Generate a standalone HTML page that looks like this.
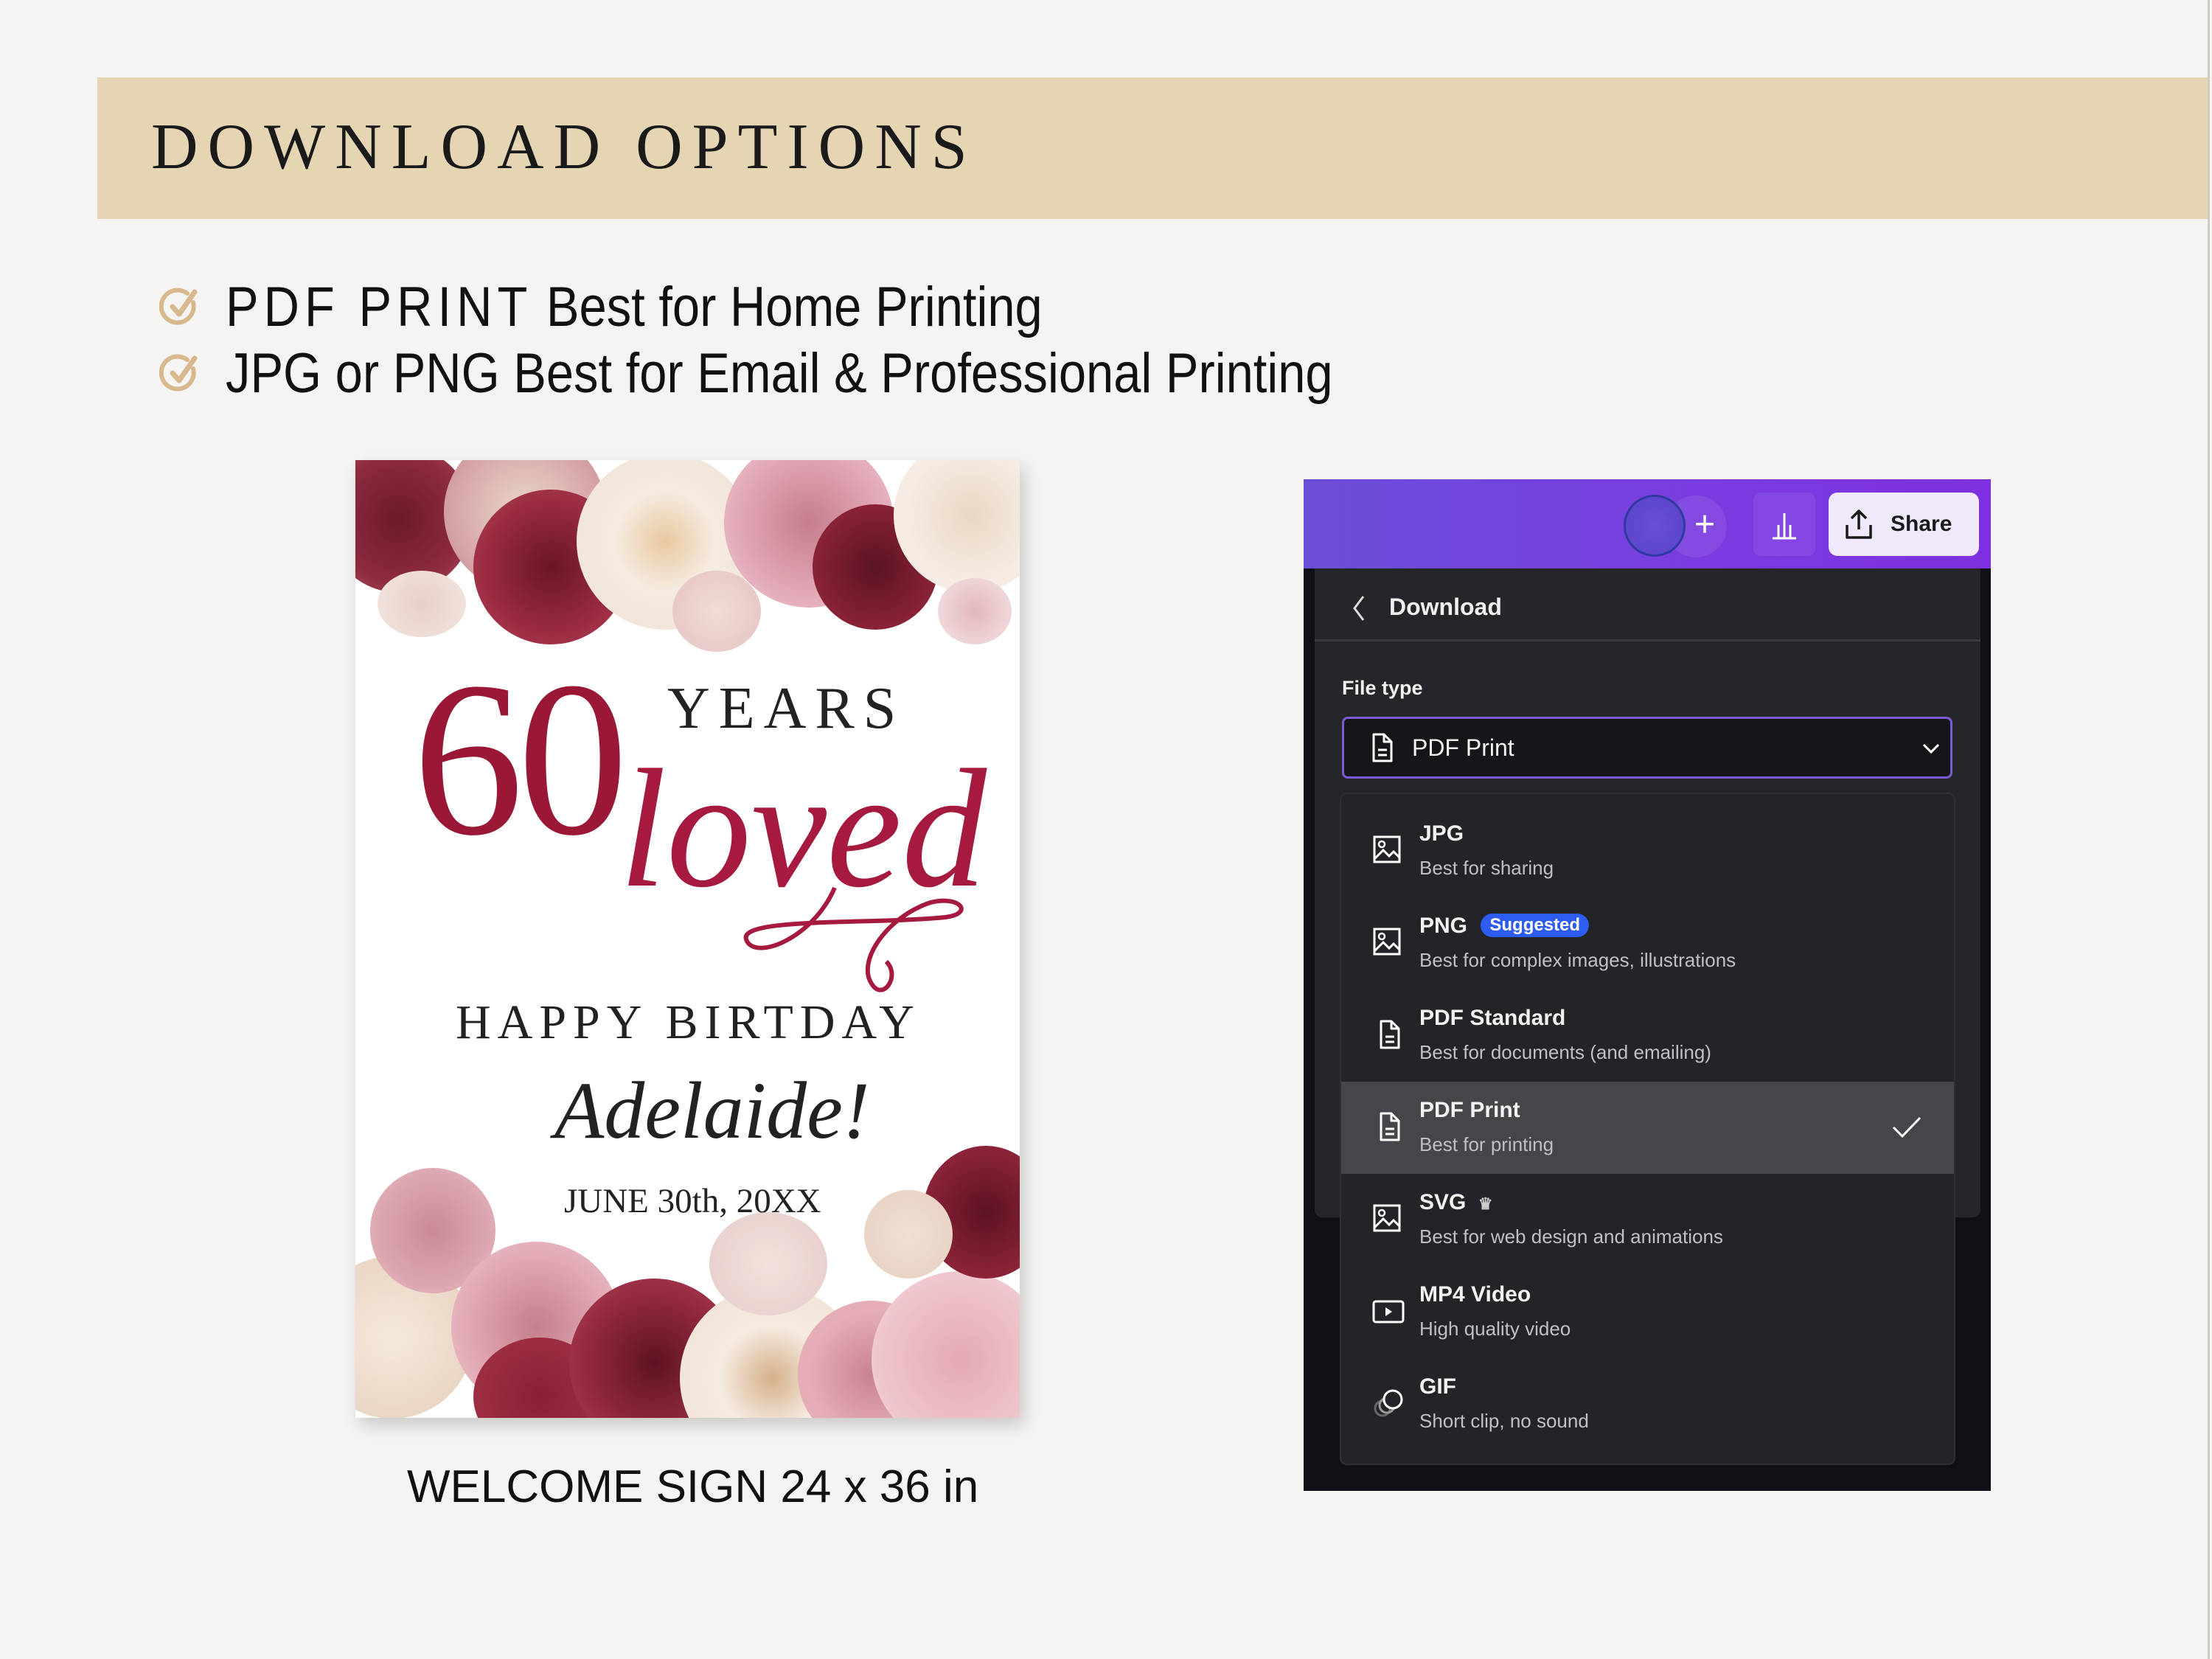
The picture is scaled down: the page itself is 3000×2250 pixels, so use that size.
<!DOCTYPE html>
<html><head><meta charset="utf-8"><style>
*{margin:0;padding:0;box-sizing:border-box}
body{width:3000px;height:2250px;background:#f5f4f2;position:relative;overflow:hidden;font-family:"Liberation Sans",sans-serif}
.abs{position:absolute}
#banner{left:132px;top:105px;width:2864px;height:192px;background:#e6d5b3}
#rline{left:2994px;top:0;width:3px;height:2250px;background:#cfcac4}
#title{left:205px;top:152px;font-family:"Liberation Serif",serif;font-size:88px;line-height:96px;letter-spacing:13px;color:#1a1a1a;white-space:nowrap;font-weight:normal}
.chk{position:absolute;white-space:nowrap;font-size:76px;line-height:80px;color:#111;transform:scaleX(0.88);transform-origin:left center}
.ic{position:absolute;width:58px;height:58px}
#card{left:482px;top:624px;width:901px;height:1299px;background:#fff;overflow:hidden;box-shadow:6px 10px 22px rgba(0,0,0,.18)}
.f{position:absolute;border-radius:50%}
.serif{font-family:"Liberation Serif",serif}
#panel{left:1768px;top:650px;width:932px;height:1372px;background:#0f1116;overflow:hidden}
#bar{left:0;top:0;width:932px;height:121px;background:linear-gradient(90deg,#6b4fd9,#7a3be0 60%,#7d30df)}
#dl{left:15px;top:121px;width:903px;height:880px;background:#252629;border-radius:0 0 10px 10px}
.row{position:absolute;left:0;width:833px;height:125px}
.row .t{position:absolute;left:106px;top:22px;font-size:30px;color:#f2f2f2;font-weight:bold;white-space:nowrap}
.row .s{position:absolute;left:106px;top:70px;font-size:26px;color:#c0c0c4;white-space:nowrap}
.row svg{position:absolute;left:42px;top:40px}
</style></head><body>
<div id="banner" class="abs"></div>
<div id="rline" class="abs"></div>
<div id="title" class="abs">DOWNLOAD OPTIONS</div>

<svg class="ic" style="left:216px;top:388px" viewBox="0 0 58 58"><path d="M46 22 A22 22 0 1 1 38 10" fill="none" stroke="#d7b98d" stroke-width="6" stroke-linecap="round"/><path d="M18 28 L27 38 L48 8" fill="none" stroke="#d7b98d" stroke-width="7" stroke-linecap="round" stroke-linejoin="round"/></svg>
<svg class="ic" style="left:216px;top:478px" viewBox="0 0 58 58"><path d="M46 22 A22 22 0 1 1 38 10" fill="none" stroke="#d7b98d" stroke-width="6" stroke-linecap="round"/><path d="M18 28 L27 38 L48 8" fill="none" stroke="#d7b98d" stroke-width="7" stroke-linecap="round" stroke-linejoin="round"/></svg>
<div class="chk" style="left:306px;top:377px"><span style="letter-spacing:8px">PDF PRINT</span> Best for Home Printing</div>
<div class="chk" style="left:306px;top:467px">JPG or PNG Best for Email &amp; Professional Printing</div>

<div id="card" class="abs">
 <div class="f" style="left:-40px;top:-20px;width:200px;height:200px;background:radial-gradient(circle,#6b1a2a,#8e2a3e 60%,#b05a64)"></div>
 <div class="f" style="left:120px;top:-40px;width:220px;height:220px;background:radial-gradient(circle,#e8d8c8,#d7a7a9 60%,#c28488)"></div>
 <div class="f" style="left:160px;top:40px;width:210px;height:210px;background:radial-gradient(circle,#6a1626,#9a2b40 60%,#b8465a)"></div>
 <div class="f" style="left:300px;top:-10px;width:240px;height:240px;background:radial-gradient(circle,#e8c9a0,#f5ebe0 40%,#efe1d4)"></div>
 <div class="f" style="left:500px;top:-30px;width:230px;height:230px;background:radial-gradient(circle,#c67d8e,#e2a9b6 60%,#f0cdd4)"></div>
 <div class="f" style="left:620px;top:60px;width:170px;height:170px;background:radial-gradient(circle,#5a1422,#8a2236 70%)"></div>
 <div class="f" style="left:730px;top:-30px;width:210px;height:210px;background:radial-gradient(circle,#e9d7c2,#f6ece4 60%)"></div>
 <div class="f" style="left:430px;top:150px;width:120px;height:110px;background:radial-gradient(circle,#f0dcd6,#e5c2c2)"></div>
 <div class="f" style="left:30px;top:150px;width:120px;height:90px;background:radial-gradient(circle,#e8cfc8,#f3e6e0)"></div>
 <div class="f" style="left:790px;top:160px;width:100px;height:90px;background:radial-gradient(circle,#e2b7bd,#f4e4e4)"></div>
 <div class="abs serif" style="left:78px;top:255px;font-size:300px;line-height:300px;color:#9b1736;letter-spacing:-8px">60</div>
 <div class="abs serif" style="left:423px;top:296px;font-size:80px;line-height:82px;color:#222;letter-spacing:12px">YEARS</div>
 <div class="abs serif" style="left:358px;top:385px;font-size:230px;line-height:230px;color:#a51a3e;font-style:italic">loved</div>
 <svg class="abs" style="left:500px;top:560px" width="340" height="200" viewBox="0 0 340 200"><path d="M150 20 C120 90 40 120 30 90 C20 60 200 70 300 60 C340 55 320 30 280 40 C220 60 180 120 200 150 C215 175 240 140 220 120" fill="none" stroke="#a51a3e" stroke-width="6"/></svg>
 <div class="abs serif" style="left:136px;top:728px;font-size:66px;line-height:70px;color:#222;letter-spacing:9px;white-space:nowrap">HAPPY BIRTDAY</div>
 <div class="abs serif" style="left:270px;top:822px;font-size:110px;line-height:120px;color:#222;font-style:italic;white-space:nowrap">Adelaide!</div>
 <div class="abs serif" style="left:283px;top:980px;font-size:47px;line-height:50px;color:#222;white-space:nowrap">JUNE 30th, 20XX</div>
 <div class="f" style="left:-60px;top:1080px;width:220px;height:220px;background:radial-gradient(circle,#f5e9dc,#ead6c4 70%)"></div>
 <div class="f" style="left:20px;top:960px;width:170px;height:170px;background:radial-gradient(circle,#c88a96,#deaab4 70%)"></div>
 <div class="f" style="left:130px;top:1060px;width:230px;height:230px;background:radial-gradient(circle,#c47f8c,#e2aab6 60%,#eec8cf)"></div>
 <div class="f" style="left:160px;top:1190px;width:180px;height:160px;background:radial-gradient(circle,#8a1f34,#a53448)"></div>
 <div class="f" style="left:290px;top:1110px;width:230px;height:230px;background:radial-gradient(circle,#5e1422,#962a40 60%,#b0485a)"></div>
 <div class="f" style="left:440px;top:1120px;width:250px;height:250px;background:radial-gradient(circle,#d5b08a,#f5ebe0 40%,#eee0d2)"></div>
 <div class="f" style="left:480px;top:1020px;width:160px;height:140px;background:radial-gradient(circle,#f2e2dc,#e5cbc9)"></div>
 <div class="f" style="left:600px;top:1140px;width:200px;height:200px;background:radial-gradient(circle,#c9828f,#e4adb8 60%)"></div>
 <div class="f" style="left:700px;top:1100px;width:240px;height:240px;background:radial-gradient(circle,#e3a9b4,#f0c8cf 70%)"></div>
 <div class="f" style="left:770px;top:930px;width:170px;height:180px;background:radial-gradient(circle,#5c1322,#8c2338 70%)"></div>
 <div class="f" style="left:690px;top:990px;width:120px;height:120px;background:radial-gradient(circle,#efe0d4,#e6cfc0)"></div>
</div>
<div class="abs" style="left:552px;top:1979px;font-size:62px;line-height:76px;color:#111;white-space:nowrap">WELCOME SIGN 24 x 36 in</div>

<div id="panel" class="abs">
 <div id="bar" class="abs">
  <div class="abs" style="left:490px;top:22px;width:84px;height:84px;border-radius:50%;background:rgba(255,255,255,.08)"></div>
  <div class="abs" style="left:434px;top:21px;width:84px;height:84px;border-radius:50%;background:radial-gradient(circle,#6a4cd8,#5843c8);border:3px solid #2e3aa0"></div>
  <div class="abs" style="left:530px;top:32px;font-size:48px;color:#fff;line-height:60px">+</div>
  <div class="abs" style="left:610px;top:18px;width:84px;height:86px;border-radius:10px;background:rgba(255,255,255,.08)"></div>
  <svg class="abs" style="left:632px;top:40px" width="40" height="42" viewBox="0 0 40 42"><path d="M4 40H36M12 40V22M20 40V6M28 40V22" stroke="#fff" stroke-width="3" fill="none"/></svg>
  <div class="abs" style="left:712px;top:18px;width:204px;height:86px;border-radius:12px;background:#efe9fb"></div>
  <svg class="abs" style="left:733px;top:40px" width="40" height="42" viewBox="0 0 40 42"><path d="M20 28V4M10 13L20 3L30 13M4 22V39H36V22" stroke="#1b1b1b" stroke-width="3.5" fill="none" stroke-linejoin="round"/></svg>
  <div class="abs" style="left:796px;top:44px;font-size:30px;font-weight:bold;color:#1b1b1b">Share</div>
 </div>
 <div id="dl" class="abs">
  <svg class="abs" style="left:50px;top:36px" width="20" height="36" viewBox="0 0 20 36"><path d="M16 2L4 18L16 34" stroke="#ddd" stroke-width="3" fill="none"/></svg>
  <div class="abs" style="left:101px;top:34px;font-size:32px;font-weight:bold;color:#f0f0f0">Download</div>
  <div class="abs" style="left:0;top:96px;width:903px;height:3px;background:#3a3b3f"></div>
  <div class="abs" style="left:37px;top:147px;font-size:27px;font-weight:bold;color:#f0f0f0">File type</div>
  <div class="abs" style="left:37px;top:201px;width:828px;height:84px;border:3px solid #7c5ad6;border-radius:8px;background:#151619"></div>
  <svg class="abs" style="left:77px;top:222px" width="30" height="42" viewBox="0 0 30 42"><path d="M3 3H17L27 13V39H3Z M17 3V13H27 M9 24H21M9 31H21" stroke="#fff" stroke-width="3" fill="none" stroke-linejoin="round"/></svg>
  <div class="abs" style="left:132px;top:225px;font-size:32px;color:#f2f2f2">PDF Print</div>
  <svg class="abs" style="left:824px;top:236px" width="24" height="16" viewBox="0 0 24 16"><path d="M2 3L12 13L22 3" stroke="#fff" stroke-width="3" fill="none"/></svg>
 </div>
 <div class="abs" style="left:49px;top:425px;width:835px;height:912px;background:#232427;border:2px solid #2f3034;border-radius:10px">
  <div class="row" style="top:15px"><svg width="40" height="40" viewBox="0 0 40 40"><rect x="3" y="3" width="34" height="34" fill="none" stroke="#fff" stroke-width="3"/><circle cx="13" cy="13" r="4" fill="none" stroke="#fff" stroke-width="2.5"/><path d="M3 33L15 21L23 29L29 23L37 31" stroke="#fff" stroke-width="3" fill="none"/></svg><div class="t">JPG</div><div class="s">Best for sharing</div></div>
  <div class="row" style="top:140px"><svg width="40" height="40" viewBox="0 0 40 40"><rect x="3" y="3" width="34" height="34" fill="none" stroke="#fff" stroke-width="3"/><circle cx="13" cy="13" r="4" fill="none" stroke="#fff" stroke-width="2.5"/><path d="M3 33L15 21L23 29L29 23L37 31" stroke="#fff" stroke-width="3" fill="none"/></svg><div class="t">PNG <span style="display:inline-block;margin-left:10px;background:#2d5cf0;color:#fff;font-size:24px;padding:2px 12px;border-radius:16px;vertical-align:3px">Suggested</span></div><div class="s">Best for complex images, illustrations</div></div>
  <div class="row" style="top:265px"><svg width="40" height="42" viewBox="0 0 30 42" style="left:46px"><path d="M3 3H17L27 13V39H3Z M17 3V13H27 M9 24H21M9 31H21" stroke="#fff" stroke-width="3" fill="none" stroke-linejoin="round"/></svg><div class="t">PDF Standard</div><div class="s">Best for documents (and emailing)</div></div>
  <div class="row" style="top:390px;background:#45464a;width:831px"><svg width="40" height="42" viewBox="0 0 30 42" style="left:46px"><path d="M3 3H17L27 13V39H3Z M17 3V13H27 M9 24H21M9 31H21" stroke="#fff" stroke-width="3" fill="none" stroke-linejoin="round"/></svg><div class="t">PDF Print</div><div class="s">Best for printing</div><svg width="42" height="32" viewBox="0 0 42 32" style="left:746px;top:46px"><path d="M3 16L15 28L39 3" stroke="#fff" stroke-width="3" fill="none"/></svg></div>
  <div class="row" style="top:515px"><svg width="40" height="40" viewBox="0 0 40 40"><rect x="3" y="3" width="34" height="34" fill="none" stroke="#fff" stroke-width="3"/><circle cx="13" cy="13" r="4" fill="none" stroke="#fff" stroke-width="2.5"/><path d="M3 33L15 21L23 29L29 23L37 31" stroke="#fff" stroke-width="3" fill="none"/></svg><div class="t">SVG <span style="font-size:22px;color:#ccc;margin-left:8px">♛</span></div><div class="s">Best for web design and animations</div></div>
  <div class="row" style="top:640px"><svg width="44" height="32" viewBox="0 0 44 32" style="top:46px"><rect x="2" y="2" width="40" height="28" rx="3" fill="none" stroke="#fff" stroke-width="3"/><path d="M18 10L27 16L18 22Z" fill="#fff"/></svg><div class="t">MP4 Video</div><div class="s">High quality video</div></div>
  <div class="row" style="top:765px"><svg width="44" height="40" viewBox="0 0 44 40"><circle cx="14" cy="28" r="10" fill="none" stroke="#666" stroke-width="3"/><circle cx="20" cy="24" r="10" fill="none" stroke="#999" stroke-width="3"/><circle cx="28" cy="16" r="12" fill="#232427" stroke="#fff" stroke-width="3"/></svg><div class="t">GIF</div><div class="s">Short clip, no sound</div></div>
 </div>
</div>
</body></html>
